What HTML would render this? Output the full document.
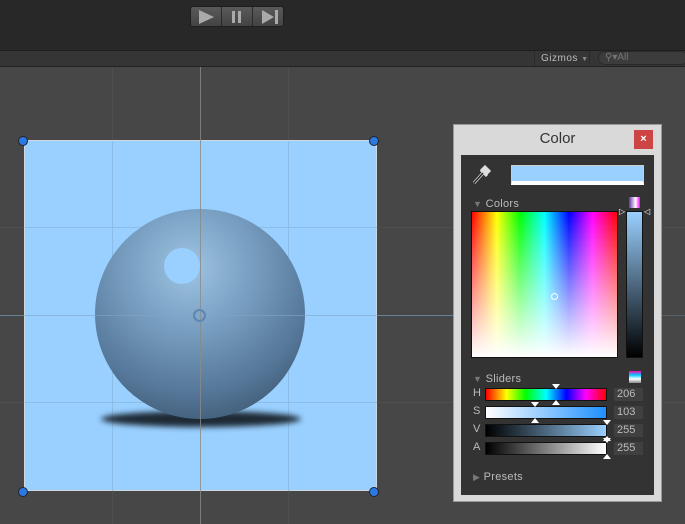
<!DOCTYPE html>
<html><head><meta charset="utf-8"><style>
*{margin:0;padding:0;box-sizing:border-box}
body{width:685px;height:524px;overflow:hidden;background:#474747;font-family:"Liberation Sans",sans-serif;position:relative}
.a{position:absolute}
.t{position:absolute;width:0;height:0;border-left:4px solid transparent;border-right:4px solid transparent}
</style></head><body>
<div class="a" style="left:0;top:0;width:685px;height:50px;background:#282828"></div>
<div class="a" style="left:190px;top:6px;width:94px;height:21px;border-radius:3px;background:linear-gradient(#5a5a5a,#434343);border:1px solid #1e1e1e"></div>
<div class="a" style="left:221px;top:7px;width:1px;height:19px;background:#2a2a2a"></div>
<div class="a" style="left:252px;top:7px;width:1px;height:19px;background:#2a2a2a"></div>
<svg class="a" style="left:190px;top:6px" width="94" height="22"><path d="M9 4 L24 11 L9 18Z" fill="#aaa"/><rect x="42" y="5" width="3" height="12" fill="#aaa"/><rect x="48" y="5" width="3" height="12" fill="#aaa"/><path d="M72 4 L84 11 L72 18Z" fill="#aaa"/><rect x="85" y="4" width="3" height="14" fill="#aaa"/></svg>
<div class="a" style="left:0;top:50px;width:685px;height:17px;background:#353535;border-top:1px solid #1f1f1f;border-bottom:1px solid #222"></div>
<div class="a" style="left:534px;top:51px;width:56px;height:15px;border-left:1px solid #2a2a2a;border-right:1px solid #2a2a2a;color:#bbb;font-size:10px;line-height:15px;padding-left:6px;letter-spacing:.5px">Gizmos <span style="font-size:7px;color:#888">▼</span></div>
<div class="a" style="left:598px;top:51px;width:90px;height:14px;border-radius:7px;background:#3c3c3c;border:1px solid #2a2a2a;color:#777;font-size:10px;line-height:12px;padding-left:6px">⚲▾All</div>
<!-- grid -->
<div class="a" style="left:112px;top:67px;width:1px;height:457px;background:#4f4f4f"></div>
<div class="a" style="left:288px;top:67px;width:1px;height:457px;background:#4f4f4f"></div>
<div class="a" style="left:0;top:227px;width:685px;height:1px;background:#4f4f4f"></div>
<div class="a" style="left:0;top:402px;width:685px;height:1px;background:#4f4f4f"></div>
<!-- blue rect -->
<div class="a" style="left:24px;top:140px;width:353px;height:351px;background:#99d0ff;border:1px solid #cfd8e0"></div>
<div class="a" style="left:112px;top:141px;width:1px;height:350px;background:#8dbde6"></div>
<div class="a" style="left:288px;top:141px;width:1px;height:350px;background:#8dbde6"></div>
<div class="a" style="left:25px;top:227px;width:352px;height:1px;background:#8dbde6"></div>
<div class="a" style="left:25px;top:402px;width:352px;height:1px;background:#8dbde6"></div>
<div class="a" style="left:101px;top:411px;width:200px;height:16px;border-radius:50%;background:#1e2a36;filter:blur(3px)"></div>
<div class="a" style="left:95px;top:209px;width:210px;height:210px;border-radius:50%;background:radial-gradient(circle at 45% 28%,#9fc4e2 0%,#7ba2c4 30%,#56789a 65%,#2f4558 100%)"></div>
<div class="a" style="left:164px;top:248px;width:36px;height:36px;border-radius:50%;background:#99d0ff"></div>
<div class="a" style="left:200px;top:67px;width:1px;height:457px;background:#8a8a8a;opacity:.8"></div>
<div class="a" style="left:0;top:315px;width:685px;height:1px;background:#7fa6c6;opacity:.6"></div>
<div class="a" style="left:193px;top:309px;width:13px;height:13px;border-radius:50%;border:2px solid #5d87b0"></div>
<div class="a" style="left:18px;top:136px;width:10px;height:10px;border-radius:50%;background:#2a7ae0;border:1px solid #223"></div>
<div class="a" style="left:369px;top:136px;width:10px;height:10px;border-radius:50%;background:#2a7ae0;border:1px solid #223"></div>
<div class="a" style="left:18px;top:487px;width:10px;height:10px;border-radius:50%;background:#2a7ae0;border:1px solid #223"></div>
<div class="a" style="left:369px;top:487px;width:10px;height:10px;border-radius:50%;background:#2a7ae0;border:1px solid #223"></div>
<!-- color window -->
<div class="a" style="left:453px;top:124px;width:209px;height:378px;background:#d9d9d9;border:1px solid #999"></div>
<div class="a" style="left:453px;top:130px;width:209px;text-align:center;font-size:15px;color:#333">Color</div>
<div class="a" style="left:634px;top:130px;width:19px;height:19px;background:#c44;color:#fff;font-size:11px;font-weight:bold;text-align:center;line-height:18px">×</div>
<div class="a" style="left:461px;top:155px;width:193px;height:340px;background:#333"></div>
<svg class="a" style="left:471px;top:164px" width="20" height="22"><path d="M3 19 L12 9 M10 6 L16 12 M14 3 L18 7 L15 10 L11 6Z" stroke="#ddd" stroke-width="3" fill="#ddd"/><path d="M3 19 L12 9" stroke="#222" stroke-width="1.5"/></svg>
<div class="a" style="left:511px;top:165px;width:133px;height:20px;background:#99d0ff;border:1px solid #ccc;border-bottom:4px solid #fff"></div>
<div class="a" style="left:473px;top:198px;color:#bbb;font-size:11px;letter-spacing:.3px"><span style="color:#777;font-size:9px">▼</span> Colors</div>
<div class="a" style="left:629px;top:197px;width:11px;height:11px;background:linear-gradient(90deg,#63a,#fff 60%,#f0f)"></div>
<div class="a" style="left:471px;top:211px;width:147px;height:147px;background:linear-gradient(to bottom,rgba(255,255,255,0),#fff),linear-gradient(90deg,#f00,#ff0 17%,#0f0 33%,#0ff 50%,#00f 67%,#f0f 83%,#f00);border:1px solid #111"></div>
<div class="a" style="left:551px;top:293px;width:7px;height:7px;border-radius:50%;border:1px solid #fff"></div>
<div class="a" style="left:626px;top:211px;width:17px;height:147px;background:linear-gradient(#99d0ff,#000);border:1px solid #111"></div>
<div class="a" style="left:619px;top:207px;color:#fff;font-size:8px">▷</div>
<div class="a" style="left:644px;top:207px;color:#fff;font-size:8px">◁</div>
<div class="a" style="left:473px;top:373px;color:#bbb;font-size:11px;letter-spacing:.3px"><span style="color:#777;font-size:9px">▼</span> Sliders</div>
<div class="a" style="left:629px;top:371px;width:12px;height:12px;background:linear-gradient(#f0a,#0cf,#fff,#888)"></div>
<div class="a" style="left:485px;top:388px;width:122px;height:13px;border:1px solid #111;background:linear-gradient(90deg,#f00,#ff0 17%,#0f0 33%,#0ff 50%,#00f 67%,#f0f 83%,#f00)"></div>
<div class="a" style="left:485px;top:406px;width:122px;height:13px;border:1px solid #111;background:linear-gradient(90deg,#fff,#1e90ff)"></div>
<div class="a" style="left:485px;top:424px;width:122px;height:13px;border:1px solid #111;background:linear-gradient(90deg,#000,#99d0ff)"></div>
<div class="a" style="left:485px;top:442px;width:122px;height:13px;border:1px solid #111;background:linear-gradient(90deg,#000,#fff)"></div>
<div class="t" style="left:552px;top:384px;border-top:5px solid #fff"></div>
<div class="t" style="left:552px;top:400px;border-bottom:5px solid #fff"></div>
<div class="t" style="left:531px;top:402px;border-top:5px solid #fff"></div>
<div class="t" style="left:531px;top:418px;border-bottom:5px solid #fff"></div>
<div class="t" style="left:603px;top:420px;border-top:5px solid #fff"></div>
<div class="t" style="left:603px;top:436px;border-bottom:5px solid #fff"></div>
<div class="t" style="left:603px;top:438px;border-top:5px solid #fff"></div>
<div class="t" style="left:603px;top:454px;border-bottom:5px solid #fff"></div>
<div class="a" style="left:473px;top:387px;color:#bbb;font-size:11px">H</div>
<div class="a" style="left:473px;top:405px;color:#bbb;font-size:11px">S</div>
<div class="a" style="left:473px;top:423px;color:#bbb;font-size:11px">V</div>
<div class="a" style="left:473px;top:441px;color:#bbb;font-size:11px">A</div>
<div class="a" style="left:614px;top:388px;width:29px;height:13px;background:#404040;color:#bbb;font-size:11px;line-height:13px;padding-left:3px">206</div>
<div class="a" style="left:614px;top:406px;width:29px;height:13px;background:#404040;color:#bbb;font-size:11px;line-height:13px;padding-left:3px">103</div>
<div class="a" style="left:614px;top:424px;width:29px;height:13px;background:#404040;color:#bbb;font-size:11px;line-height:13px;padding-left:3px">255</div>
<div class="a" style="left:614px;top:442px;width:29px;height:13px;background:#404040;color:#bbb;font-size:11px;line-height:13px;padding-left:3px">255</div>
<div class="a" style="left:473px;top:471px;color:#bbb;font-size:11px;letter-spacing:.3px"><span style="color:#777;font-size:9px">▶</span> Presets</div>
<div class="a" style="left:662px;top:68px;width:23px;height:456px;background:#474747"></div>
<div class="a" style="left:662px;top:227px;width:23px;height:1px;background:#4f4f4f"></div>
<div class="a" style="left:662px;top:402px;width:23px;height:1px;background:#4f4f4f"></div>
<div class="a" style="left:662px;top:315px;width:23px;height:1px;background:#55606a"></div>
</body></html>
